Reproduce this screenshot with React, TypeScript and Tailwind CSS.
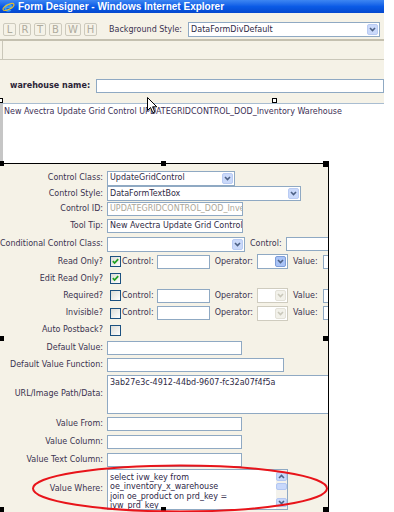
import React from "react";

const font = { fontFamily: '"DejaVu Sans", Verdana, sans-serif' };

function Chevron({ color = "#4d6185" }: { color?: string }) {
    return (
        <svg width="7" height="5" viewBox="0 0 7 5">
            <path d="M1 1l2.5 2.5L6 1" fill="none" stroke={color} strokeWidth="1.6" />
        </svg>
    );
}

function Select({ w, text, hot, disabled }: { w: string; text?: string; hot?: boolean; disabled?: boolean }) {
    const border = disabled ? "border-[#cfccbf]" : "border-[#8fa9c3]";
    const btn = hot
        ? "bg-[#a9c3f6] border-[#7e9ed8]"
        : disabled
        ? "bg-[#f2f1ea] border-[#e3e1d8]"
        : "bg-[#cad9fa] border-[#b9cbf3]";
    return (
        <div className={`h-[15px] border ${border} bg-white flex items-center shrink-0 ${w}`}>
            <span className="flex-1 pl-[2px] text-[8px] leading-[12px] text-[#2f2a45] whitespace-nowrap overflow-hidden">{text}</span>
            <span className={`w-[11px] h-[11px] mr-[1px] border rounded-[2px] flex items-center justify-center ${btn}`}>
                <Chevron color={disabled ? "#c9c7ba" : "#4d6185"} />
            </span>
        </div>
    );
}

function Input({ w, text, muted }: { w: string; text?: string; muted?: boolean }) {
    return (
        <div className={`h-[14px] border border-[#8fa9c3] bg-white flex items-center shrink-0 overflow-hidden ${w}`}>
            <span className={`pl-[2px] text-[8px] leading-[12px] whitespace-nowrap ${muted ? "text-[#aca899]" : "text-[#2f2a45]"}`}>{text}</span>
        </div>
    );
}

function Check({ on }: { on?: boolean }) {
    return (
        <span className="w-[11px] h-[11px] border border-[#1c5180] bg-gradient-to-br from-[#dcdcd6] to-white flex items-center justify-center shrink-0 ml-[3px]">
            {on && (
                <svg width="7" height="7" viewBox="0 0 7 7">
                    <path d="M0.8 3.2l1.8 1.9L6.2 1.2" fill="none" stroke="#21a121" strokeWidth="1.7" />
                </svg>
            )}
        </span>
    );
}

function Label({ children, className = "" }: { children: React.ReactNode; className?: string }) {
    return <span className={`text-[8px] leading-[10px] text-[#3b3350] whitespace-nowrap shrink-0 ${className}`}>{children}</span>;
}

function Row({ label, h, children }: { label: string; h: string; children: React.ReactNode }) {
    return (
        <div className={`flex items-center ${h}`}>
            <div className="w-[103px] shrink-0 flex justify-end">
                <Label>{label}</Label>
            </div>
            <div className="ml-[4px] flex items-center">{children}</div>
        </div>
    );
}

function RuleRow({ label, h, checked, hot, disabled }: { label: string; h: string; checked?: boolean; hot?: boolean; disabled?: boolean }) {
    return (
        <Row label={label} h={h}>
            <Check on={checked} />
            <Label className="ml-[1px]">Control:</Label>
            <Input w="w-[53px] ml-[3px]" />
            <Label className="ml-[5px]">Operator:</Label>
            <Select w="w-[31px] ml-[4px]" hot={hot} disabled={disabled} />
            <Label className="ml-[5px]">Value:</Label>
            <Input w="w-[40px] ml-[5px]" />
        </Row>
    );
}

function IeIcon() {
    return (
        <svg width="13" height="12" viewBox="0 0 13 12" className="shrink-0">
            <path d="M3.2 6.3h6.3a3.2 3.2 0 1 0 -0.9 2.6" fill="none" stroke="#3b9cf6" strokeWidth="2" />
            <ellipse cx="6.5" cy="6" rx="6" ry="2.3" transform="rotate(-28 6.5 6)" fill="none" stroke="#f6c21a" strokeWidth="1.1" />
        </svg>
    );
}

const tools = [
    { k: "L", w: "w-[13px]" },
    { k: "R", w: "w-[12px]" },
    { k: "T", w: "w-[12px]" },
    { k: "B", w: "w-[13px]" },
    { k: "W", w: "w-[16px]" },
    { k: "H", w: "w-[13px]" },
];

export default function App() {
    return (
        <div className="relative w-[394px] h-[512px] bg-white overflow-hidden" style={font}>
            {/* IE window */}
            <div className="w-[384px]">
                <div className="h-[13px] bg-gradient-to-b from-[#3d86f2] via-[#0b5be6] to-[#0548cf] flex items-center pl-[2px] gap-[3px]">
                    <IeIcon />
                    <span className="text-white font-bold text-[10px] leading-none" style={{ fontFamily: '"Liberation Sans", Arial, sans-serif' }}>
                        Form Designer - Windows Internet Explorer
                    </span>
                </div>

                <div className="h-[26px] bg-[#f5f2e7] flex items-center pt-[7px] pl-[3px]">
                    <div className="flex gap-[3px]">
                        {tools.map((t) => (
                            <span key={t.k} className={`h-[13px] ${t.w} border border-[#cdcabd] rounded-[2px] flex items-center justify-center text-[10px] leading-none text-[#aeab9e]`}>
                                {t.k}
                            </span>
                        ))}
                    </div>
                    <Label className="ml-[12px]">Background Style:</Label>
                    <Select w="w-[192px] ml-[6px]" text="DataFormDivDefault" />
                </div>

                <div className="h-[21px] bg-[#f5f2e7] border-t-2 border-[#c4c0b0] border-b border-b-[#cac7b9] pl-[2px]">
                    <div className="h-full border-l border-[#cac7b9]" />
                </div>

                <div className="h-[43px] bg-[#f5f2e7] pt-[19px] flex items-start">
                    <span className="ml-[10px] mt-[2px] font-bold text-[8px] leading-[10px] text-[#2b2436]">warehouse name:</span>
                    <div className="ml-[6px] flex-1 h-[14px] border border-[#8fa9c3] bg-white" />
                </div>

                <div className="h-[60px] border-t border-[#a9bdd1] border-l-[3px] border-l-[#c6c6c6] pt-[3px] pl-[1px] text-[8px] leading-[10px] text-[#3c2f56] whitespace-nowrap">
                    New Avectra Update Grid Control UPDATEGRIDCONTROL_DOD_Inventory Warehouse
                </div>
            </div>

            {/* properties panel */}
            <div className="w-[329px] h-[349px] bg-[#f5f2e7] border-t border-r border-black overflow-hidden pt-[6px]">
                <Row label="Control Class:" h="h-[16px]">
                    <Select w="w-[128px]" text="UpdateGridControl" />
                </Row>
                <Row label="Control Style:" h="h-[15px]">
                    <Select w="w-[194px]" text="DataFormTextBox" />
                </Row>
                <Row label="Control ID:" h="h-[15px]">
                    <Input w="w-[136px]" text="UPDATEGRIDCONTROL_DOD_Inventory Warehouse" muted />
                </Row>
                <Row label="Tool Tip:" h="h-[20px]">
                    <Input w="w-[136px]" text="New Avectra Update Grid Control" />
                </Row>
                <Row label="Conditional Control Class:" h="h-[16px]">
                    <Select w="w-[138px]" />
                    <Label className="ml-[5px]">Control:</Label>
                    <Input w="w-[60px] ml-[4px]" />
                </Row>
                <RuleRow label="Read Only?" h="h-[19px]" checked hot />
                <Row label="Edit Read Only?" h="h-[15px]">
                    <Check on />
                </Row>
                <RuleRow label="Required?" h="h-[19px]" disabled />
                <RuleRow label="Invisible?" h="h-[16px]" disabled />
                <Row label="Auto Postback?" h="h-[18px]">
                    <Check />
                </Row>
                <Row label="Default Value:" h="h-[18px]">
                    <Input w="w-[135px]" />
                </Row>
                <Row label="Default Value Function:" h="h-[16px]">
                    <Input w="w-[177px]" />
                </Row>
                <Row label="URL/Image Path/Data:" h="h-[42px]">
                    <div className="w-[240px] h-[39px] border border-[#8fa9c3] bg-white pl-[2px] pt-[2px] text-[8px] leading-[10px] text-[#2f2a45]">
                        3ab27e3c-4912-44bd-9607-fc32a07f4f5a
                    </div>
                </Row>
                <Row label="Value From:" h="h-[18px]">
                    <Input w="w-[135px]" />
                </Row>
                <Row label="Value Column:" h="h-[18px]">
                    <Input w="w-[135px]" />
                </Row>
                <Row label="Value Text Column:" h="h-[17px]">
                    <Input w="w-[135px]" />
                </Row>
                <Row label="Value Where:" h="h-[42px]">
                    <div className="w-[181px] h-[41px] border border-[#8fa9c3] bg-white flex">
                        <div className="flex-1 pl-[2px] pt-[3px] text-[8px] leading-[9.5px] text-[#2d2545] whitespace-nowrap overflow-hidden">
                            select ivw_key from
                            <br />
                            oe_inventory_x_warehouse
                            <br />
                            join oe_product on prd_key =
                            <br />
                            ivw_prd_key
                        </div>
                        <div className="w-[11px] bg-[#f3f2ec] flex flex-col py-[2px]">
                            <span className="h-[9px] bg-[#c8d8fb] border border-[#b3c7f2] rounded-[2px] flex items-center justify-center">
                                <span className="rotate-180 flex">
                                    <Chevron />
                                </span>
                            </span>
                            <span className="h-[7px] mt-[2px] bg-[#c8d8fb] border border-[#b3c7f2] rounded-[2px]" />
                            <span className="flex-1" />
                            <span className="h-[9px] bg-[#c8d8fb] border border-[#b3c7f2] rounded-[2px] flex items-center justify-center">
                                <Chevron />
                            </span>
                        </div>
                    </div>
                </Row>
            </div>

            {/* selection handles, cursor, highlight */}
            <span className="absolute left-[-2px] top-[98px] w-[5px] h-[5px] border border-black bg-white" />
            <span className="absolute left-[272px] top-[98px] w-[5px] h-[5px] border border-black bg-white" />

            <span className="absolute left-0 top-[161px] w-[4px] h-[5px] bg-black" />
            <span className="absolute left-[161px] top-[161px] w-[5px] h-[5px] bg-black" />
            <span className="absolute left-[323px] top-[161px] w-[6px] h-[6px] bg-black" />
            <span className="absolute left-0 top-[336px] w-[4px] h-[5px] bg-black" />
            <span className="absolute left-[323px] top-[336px] w-[6px] h-[5px] bg-black" />
            <span className="absolute left-0 top-[507px] w-[4px] h-[5px] bg-black" />
            <span className="absolute left-[161px] top-[507px] w-[5px] h-[5px] bg-black" />
            <span className="absolute left-[323px] top-[507px] w-[6px] h-[5px] bg-black" />

            <svg className="absolute left-[147px] top-[97px]" width="11" height="17" viewBox="0 0 11 17">
                <path d="M0.5 0.5v13l3-3 2.3 5.2 2-0.9-2.2-5h4.2z" fill="white" stroke="black" strokeWidth="1" strokeLinejoin="round" />
            </svg>

            <svg className="absolute left-0 top-[460px]" width="340" height="60" viewBox="0 0 340 60">
                <ellipse cx="180" cy="28.5" rx="147" ry="23" fill="none" stroke="#e8141a" strokeWidth="2" />
            </svg>
        </div>
    );
}
